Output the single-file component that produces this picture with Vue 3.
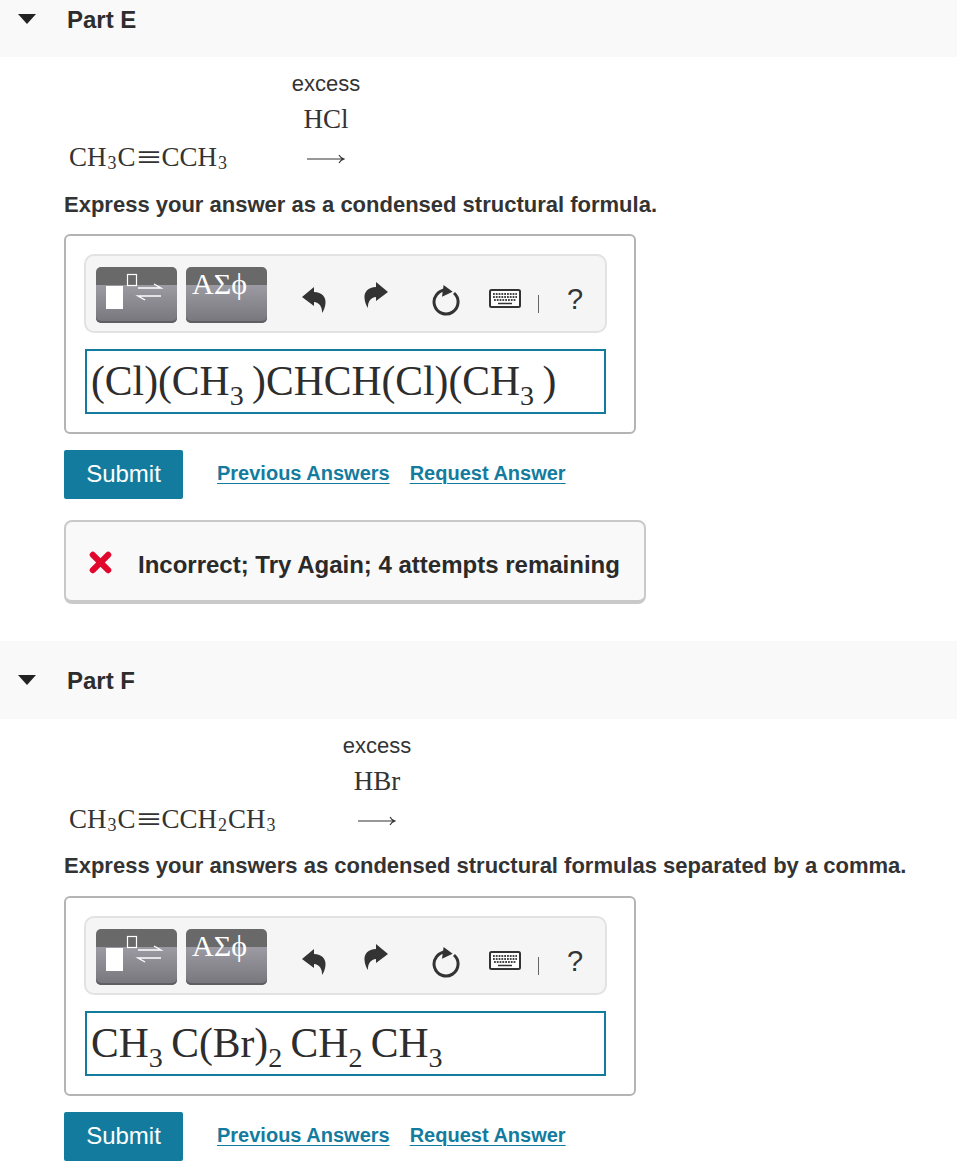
<script setup>
const parts = [
  {
    id: 'E',
    reagent: 'HCl',
    formula: [['CH'], ['3', 'sub'], ['C'], ['≡', 'bond'], ['CCH'], ['3', 'sub']],
    prompt: 'Express your answer as a condensed structural formula.',
    answer: [['(Cl)(CH'], ['3', 'sub'], [' )CHCH(Cl)(CH'], ['3', 'sub'], [' )']],
    feedback: 'Incorrect; Try Again; 4 attempts remaining'
  },
  {
    id: 'F',
    reagent: 'HBr',
    formula: [['CH'], ['3', 'sub'], ['C'], ['≡', 'bond'], ['CCH'], ['2', 'sub'], ['CH'], ['3', 'sub']],
    prompt: 'Express your answers as condensed structural formulas separated by a comma.',
    answer: [['CH'], ['3', 'sub'], [' C(Br)'], ['2', 'sub'], [' CH'], ['2', 'sub'], [' CH'], ['3', 'sub']],
    feedback: ''
  }
]
</script>

<template>
  <div class="page">
    <section v-for="part in parts" :key="part.id" class="part" :class="'part-' + part.id">
      <header class="part-head">
        <span class="caret"></span>
        <h2>Part {{ part.id }}</h2>
      </header>

      <div class="reaction">
        <div class="formula">
          <span v-for="(bit, i) in part.formula" :key="i" :class="bit[1]">{{ bit[0] }}</span>
        </div>
        <div class="reagent">
          <span class="excess">excess</span>
          <span class="reagent-name">{{ part.reagent }}</span>
          <svg class="long-arrow" width="38" height="12" viewBox="0 0 38 12">
            <path d="M0 6H37M32 2q1.500 3 5 4q-3.500 1-5 4" fill="none" stroke="#333" stroke-width="1.100" />
          </svg>
        </div>
      </div>

      <p class="prompt">{{ part.prompt }}</p>

      <div class="answer-box">
        <div class="toolbar">
          <button class="tpl-btn">
            <svg width="81" height="56" viewBox="0 0 81 56">
              <rect x="10" y="19" width="17" height="23" fill="#fff" />
              <rect x="31.500" y="7.500" width="9" height="11" fill="none" stroke="#fff" stroke-width="1.200" />
              <path d="M42 21H65L58 17M65 29H42L49 33" fill="none" stroke="#fff" stroke-width="1.400" />
            </svg>
          </button>
          <button class="tpl-btn symbol-btn">ΑΣϕ</button>
          <svg class="tool undo" width="24" height="26" viewBox="0 0 24 26">
            <path d="M0 10 12 0v5c8 0 12 5 11.500 11-.2 4-2 8-3.500 10 .6-6-3-11-8-11v4z" fill="#333" />
          </svg>
          <svg class="tool redo" width="24" height="26" viewBox="0 0 24 26">
            <path d="M24 10 12 0v5C4 5 0 10 .5 16c.2 4 2 8 3.500 10-.6-6 3-11 8-11v4z" fill="#333" />
          </svg>
          <svg class="tool reset" width="28" height="32" viewBox="0 0 28 32">
            <path d="M14 5A12 12 0 1 0 22 8" fill="none" stroke="#333" stroke-width="3" />
            <path d="M11.600 0 20.700 6.700 10 11.700z" fill="#333" />
          </svg>
          <svg class="tool keyboard" width="32" height="20" viewBox="0 0 32 20">
            <rect x="1" y="1" width="30" height="17" rx="1.500" fill="#fff" stroke="#333" stroke-width="2" />
            <path d="M4 5h24M4 8h24M5 11h22" stroke="#444" stroke-width="1.800" stroke-dasharray="1.800 1" />
            <path d="M9 14.500h14" stroke="#333" stroke-width="1.500" />
          </svg>
          <span class="divider"></span>
          <span class="help">?</span>
        </div>
        <div class="answer-input">
          <span v-for="(bit, i) in part.answer" :key="i" :class="bit[1]">{{ bit[0] }}</span>
        </div>
      </div>

      <div class="actions">
        <button class="submit">Submit</button>
        <a class="link first">Previous Answers</a>
        <a class="link">Request Answer</a>
      </div>

      <div v-if="part.feedback" class="feedback">
        <svg width="23" height="23" viewBox="0 0 24 24">
          <path d="M4 4 20 20M20 4 4 20" stroke="#e1062c" stroke-width="6.500" stroke-linecap="round" />
        </svg>
        <span>{{ part.feedback }}</span>
      </div>
    </section>
  </div>
</template>

<style scoped>
.page {
  width: 957px;
  height: 1169px;
  overflow: hidden;
  background: #fff;
  color: #333;
  font-family: "Liberation Sans", Arial, sans-serif;
}

.part-F {
  margin-top: 37px;
}

.part-head {
  display: flex;
  align-items: center;
  height: 78px;
  background: #f9f9f9;
}

.part-E .part-head {
  height: 57px;
  padding-bottom: 19px;
  box-sizing: border-box;
}

.part-head h2 {
  margin: 1px 0 0 31px;
  font-size: 24px;
  font-weight: 700;
  color: #2d2d2d;
}

.caret {
  margin-left: 18px;
  width: 0;
  height: 0;
  border-left: 9px solid transparent;
  border-right: 9px solid transparent;
  border-top: 10px solid #222;
}

.reaction {
  display: flex;
  align-items: flex-end;
  height: 118px;
  padding-left: 69px;
  font-family: "Liberation Serif", "Times New Roman", serif;
  font-size: 27px;
  color: #333;
}

.formula {
  line-height: 30px;
  padding-bottom: 3px;
  white-space: nowrap;
}

.part-E .formula {
  width: 235px;
}

.part-F .formula {
  width: 286px;
}

.formula .sub {
  padding: 0 1px;
  font-size: 18px;
  line-height: 0;
  vertical-align: -3px;
}

.bond {
  display: inline-block;
  width: 26px;
  text-align: center;
  transform: scale(1.6, 1.3);
}

.reagent {
  display: flex;
  flex-direction: column;
  align-items: center;
  width: 44px;
}

.excess {
  font-family: "Liberation Sans", Arial, sans-serif;
  font-size: 22px;
  line-height: 26px;
  white-space: nowrap;
}

.reagent-name {
  margin-top: 9px;
  line-height: 26px;
}

.long-arrow {
  margin: 21px 0 10px;
}

.prompt {
  margin: 0 0 0 64px;
  height: 59px;
  padding-top: 17px;
  box-sizing: border-box;
  font-size: 22px;
  line-height: 25px;
  font-weight: 700;
  white-space: nowrap;
}

.part-F .prompt {
  padding-top: 16px;
}

.answer-box {
  width: 572px;
  height: 200px;
  margin-left: 64px;
  padding: 18px;
  box-sizing: border-box;
  border: 2px solid #b4b4b4;
  border-radius: 6px;
}

.toolbar {
  display: flex;
  align-items: center;
  width: 523px;
  height: 79px;
  box-sizing: border-box;
  padding-left: 10px;
  background: #f5f5f5;
  border: 2px solid #e2e2e2;
  border-radius: 10px;
}

.tpl-btn {
  width: 81px;
  height: 56px;
  margin-top: 3px;
  padding: 0;
  border: none;
  border-radius: 5px;
  background: linear-gradient(#696969 0 32%, #9c9ba3 32%, #77767c 100%);
  box-shadow: inset 0 -2px 0 #5f5f63;
}

.tpl-btn svg {
  display: block;
}

.symbol-btn {
  margin-left: 9px;
  padding: 0 0 22px 6px;
  color: #fff;
  font-family: "Liberation Serif", serif;
  font-size: 30px;
  line-height: 32px;
  text-align: left;
}

.tool {
  flex: none;
}

.undo {
  margin-left: 35px;
  margin-top: 13px;
}

.redo {
  margin-left: 38px;
  margin-top: 2px;
}

.reset {
  margin-left: 44px;
  margin-top: 15px;
}

.keyboard {
  margin-left: 29px;
  margin-top: 10px;
}

.divider {
  width: 1px;
  height: 18px;
  margin: 21px 0 0 17px;
  background: #666;
}

.help {
  margin: 12px 0 0 28px;
  font-size: 29px;
  color: #333;
}

.answer-input {
  width: 521px;
  height: 65px;
  margin: 16px 0 0 1px;
  padding-left: 4px;
  box-sizing: border-box;
  border: 2px solid #137c9e;
  font-family: "Liberation Serif", "Times New Roman", serif;
  font-size: 41.6px;
  word-spacing: -2px;
  line-height: 60px;
  white-space: pre;
  color: #2d2d2d;
}

.answer-input .sub {
  font-size: 28px;
  line-height: 0;
  vertical-align: -10px;
}

.actions {
  display: flex;
  align-items: center;
  height: 49px;
  margin: 16px 0 0 64px;
}

.submit {
  width: 119px;
  height: 49px;
  padding: 0 0 2px;
  border: none;
  border-radius: 2px;
  background: #137c9e;
  color: #fff;
  font-family: "Liberation Sans", Arial, sans-serif;
  font-size: 24px;
}

.link {
  margin: 0 0 3px 20px;
  color: #137c9e;
  font-size: 20px;
  font-weight: 700;
  text-decoration: underline;
  text-underline-offset: 3px;
  text-decoration-thickness: 1px;
}

.link.first {
  margin-left: 34px;
}

.feedback {
  display: flex;
  align-items: center;
  width: 582px;
  height: 84px;
  margin: 21px 0 0 64px;
  padding-left: 23px;
  box-sizing: border-box;
  background: #f9f9f9;
  border: 2px solid #c9c9c9;
  border-bottom-width: 4px;
  border-radius: 8px;
  font-size: 24px;
  font-weight: 700;
  color: #2a2a2a;
}

.feedback svg {
  margin-top: 2px;
}

.feedback span {
  margin-left: 26px;
  padding-top: 8px;
  white-space: nowrap;
}
</style>
